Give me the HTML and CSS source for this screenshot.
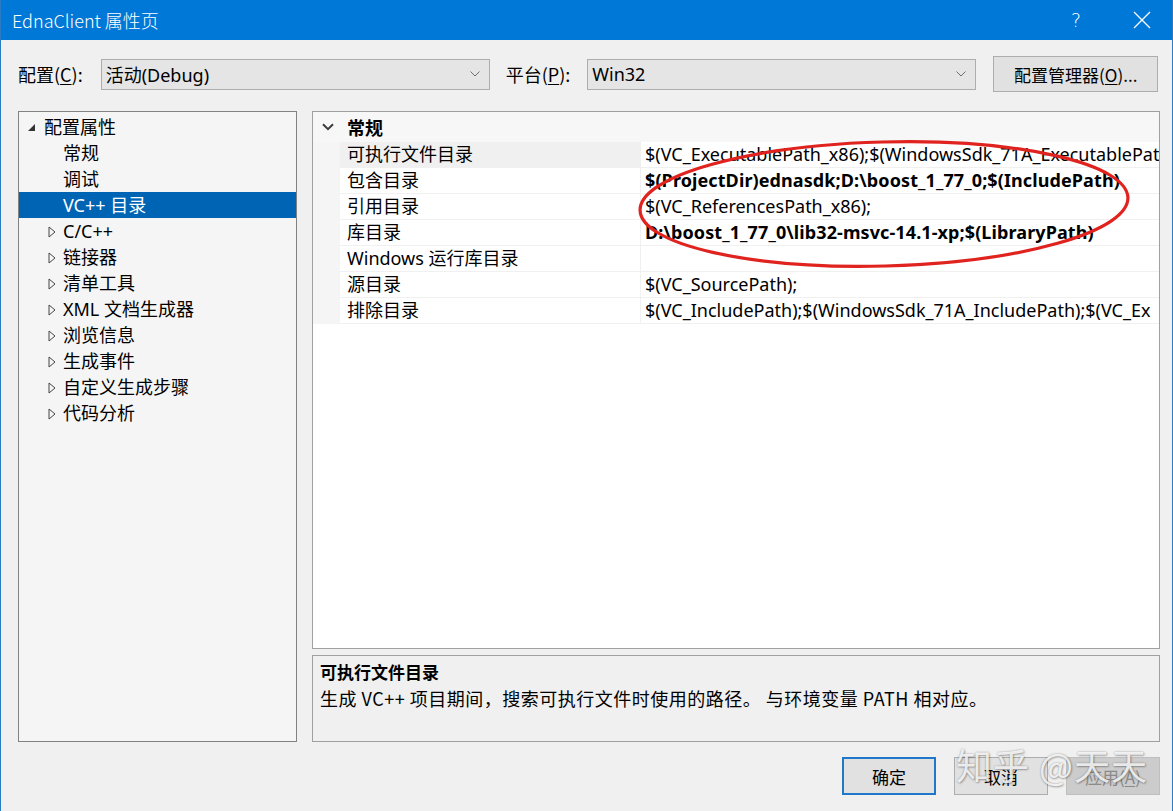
FILE: index.html
```html
<!DOCTYPE html>
<html lang="zh-CN">
<head>
<meta charset="utf-8">
<title>EdnaClient 属性页</title>
<link rel="stylesheet" href="styles.css">
</head>
<body>
<div class="window">
  <header class="titlebar">
    <span class="title">EdnaClient 属性页</span>
    <div class="title-actions">
      <span class="help">?</span>
      <svg class="close" width="18" height="18" viewBox="0 0 18 18"><path d="M1 1 L17 17 M17 1 L1 17" stroke="#fff" stroke-width="1.3" fill="none"/></svg>
    </div>
  </header>

  <div class="content">
    <div class="config-row">
      <label class="lbl">配置(<u>C</u>):</label>
      <div class="combo combo-config"><span>活动(Debug)</span><svg class="chev" width="10" height="6" viewBox="0 0 10 6"><path d="M0.5 0.5 L5 5 L9.5 0.5" stroke="#6d6d6d" stroke-width="1" fill="none"/></svg></div>
      <label class="lbl lbl-platform">平台(<u>P</u>):</label>
      <div class="combo combo-platform"><span>Win32</span><svg class="chev" width="10" height="6" viewBox="0 0 10 6"><path d="M0.5 0.5 L5 5 L9.5 0.5" stroke="#6d6d6d" stroke-width="1" fill="none"/></svg></div>
      <button class="btn btn-manager">配置管理器(<u>O</u>)...</button>
    </div>

    <div class="main">
      <nav class="tree">
        <div class="node root"><svg class="tri" width="9" height="9" viewBox="0 0 9 9"><path d="M8 1 L8 8 L1 8 Z" fill="#333"/></svg><span>配置属性</span></div>
        <div class="node leaf"><span>常规</span></div>
        <div class="node leaf"><span>调试</span></div>
        <div class="node leaf selected"><span>VC++ 目录</span></div>
        <div class="node coll"><svg class="tri" width="8" height="12" viewBox="0 0 8 12"><path d="M1 1 L7 6 L1 11 Z" fill="none" stroke="#444" stroke-width="1"/></svg><span>C/C++</span></div>
        <div class="node coll"><svg class="tri" width="8" height="12" viewBox="0 0 8 12"><path d="M1 1 L7 6 L1 11 Z" fill="none" stroke="#444" stroke-width="1"/></svg><span>链接器</span></div>
        <div class="node coll"><svg class="tri" width="8" height="12" viewBox="0 0 8 12"><path d="M1 1 L7 6 L1 11 Z" fill="none" stroke="#444" stroke-width="1"/></svg><span>清单工具</span></div>
        <div class="node coll"><svg class="tri" width="8" height="12" viewBox="0 0 8 12"><path d="M1 1 L7 6 L1 11 Z" fill="none" stroke="#444" stroke-width="1"/></svg><span>XML 文档生成器</span></div>
        <div class="node coll"><svg class="tri" width="8" height="12" viewBox="0 0 8 12"><path d="M1 1 L7 6 L1 11 Z" fill="none" stroke="#444" stroke-width="1"/></svg><span>浏览信息</span></div>
        <div class="node coll"><svg class="tri" width="8" height="12" viewBox="0 0 8 12"><path d="M1 1 L7 6 L1 11 Z" fill="none" stroke="#444" stroke-width="1"/></svg><span>生成事件</span></div>
        <div class="node coll"><svg class="tri" width="8" height="12" viewBox="0 0 8 12"><path d="M1 1 L7 6 L1 11 Z" fill="none" stroke="#444" stroke-width="1"/></svg><span>自定义生成步骤</span></div>
        <div class="node coll"><svg class="tri" width="8" height="12" viewBox="0 0 8 12"><path d="M1 1 L7 6 L1 11 Z" fill="none" stroke="#444" stroke-width="1"/></svg><span>代码分析</span></div>
      </nav>

      <section class="right">
        <div class="grid">
          <div class="cat">
            <svg class="cat-chev" width="12" height="8" viewBox="0 0 12 8"><path d="M1 1.2 L6 6.2 L11 1.2" stroke="#3c3c3c" stroke-width="2" fill="none"/></svg>
            <span>常规</span>
          </div>
          <div class="prow first"><div class="gut"></div><div class="pname">可执行文件目录</div><div class="pval">$(VC_ExecutablePath_x86);$(WindowsSdk_71A_ExecutablePath);</div></div>
          <div class="prow"><div class="gut"></div><div class="pname">包含目录</div><div class="pval bold">$(ProjectDir)ednasdk;D:\boost_1_77_0;$(IncludePath)</div></div>
          <div class="prow"><div class="gut"></div><div class="pname">引用目录</div><div class="pval">$(VC_ReferencesPath_x86);</div></div>
          <div class="prow"><div class="gut"></div><div class="pname">库目录</div><div class="pval bold">D:\boost_1_77_0\lib32-msvc-14.1-xp;$(LibraryPath)</div></div>
          <div class="prow"><div class="gut"></div><div class="pname">Windows 运行库目录</div><div class="pval"></div></div>
          <div class="prow"><div class="gut"></div><div class="pname">源目录</div><div class="pval">$(VC_SourcePath);</div></div>
          <div class="prow"><div class="gut"></div><div class="pname">排除目录</div><div class="pval">$(VC_IncludePath);$(WindowsSdk_71A_IncludePath);$(VC_Ex</div></div>
          <div class="grid-fill"><div class="gut"></div></div>
        </div>
        <div class="desc">
          <div class="desc-title">可执行文件目录</div>
          <div class="desc-text">生成 VC++ 项目期间，搜索可执行文件时使用的路径。 与环境变量 PATH 相对应。</div>
        </div>
      </section>
    </div>

    <div class="buttons">
      <button class="btn btn-ok">确定</button>
      <button class="btn">取消</button>
      <button class="btn btn-disabled">应用(<u>A</u>)</button>
    </div>
  </div>

  <svg class="mark" width="520" height="150" viewBox="0 0 520 150">
    <ellipse cx="250" cy="72" rx="244" ry="62" transform="rotate(-1.5 250 72)" fill="none" stroke="#e0231f" stroke-width="3.2"/>
  </svg>
  <div class="watermark">知乎 @天天</div>
</div>
</body>
</html>
```

FILE: styles.css
```css
* { box-sizing: border-box; }
html, body { margin: 0; padding: 0; }
body {
  width: 1173px;
  height: 811px;
  overflow: hidden;
  background: #f0f0f0;
  font-family: "Noto Sans", "Noto Sans CJK SC", sans-serif;
  font-size: 18px;
  color: #000;
}
.window {
  position: relative;
  width: 1173px;
  height: 811px;
  border-left: 1px solid #2a7bc4;
  border-right: 1px solid #2a7bc4;
  display: flex;
  flex-direction: column;
  overflow: hidden;
}
.titlebar {
  height: 40px;
  background: #0078d7;
  color: #fff;
  display: flex;
  align-items: center;
  justify-content: space-between;
  padding-left: 11px;
  padding-right: 21px;
  flex-shrink: 0;
}
.title { font-size: 18px; font-family: "Noto Sans CJK SC", "Noto Sans", sans-serif; font-weight: 300; }
.title-actions { display: flex; align-items: center; gap: 52px; }
.help { font-size: 19px; font-weight: 300; font-family: "DejaVu Sans", sans-serif; }
.content {
  flex: 1;
  display: flex;
  flex-direction: column;
  padding: 16px 12px 0 17px;
  min-width: 0;
}
.config-row {
  display: flex;
  align-items: center;
  height: 36px;
}
.config-row > * { flex-shrink: 0; }
.lbl { font-family: "Noto Sans CJK SC", sans-serif; font-size: 18px; white-space: nowrap; }
.lbl u, .btn u { text-decoration: underline; text-underline-offset: 2px; }
.combo {
  height: 31px;
  background: #e5e5e5;
  border: 1px solid #adadad;
  display: flex;
  align-items: center;
  justify-content: space-between;
  padding: 0 9px 0 4px;
  font-size: 18px;
}
.combo-config { width: 389px; margin-left: 18px; }
.lbl-platform { margin-left: 16px; }
.combo-platform { width: 389px; margin-left: 17px; }
.chev { flex-shrink: 0; }
.btn {
  font-family: "Noto Sans CJK SC", "Noto Sans", sans-serif;
  font-size: 17px;
  background: #e1e1e1;
  border: 1px solid #adadad;
  color: #000;
  padding: 0;
  height: 38px;
  width: 94px;
  flex-shrink: 0;
}
.btn-manager { width: 165px; height: 36px; margin-left: 17px; }
.main {
  display: flex;
  gap: 15px;
  margin-top: 19px;
  height: 631px;
  min-width: 0;
}
.tree {
  width: 279px;
  flex-shrink: 0;
  background: #f5f5f5;
  border: 1px solid #828282;
  padding-top: 2px;
  font-family: "Noto Sans", "Noto Sans CJK SC", sans-serif;
}
.node {
  height: 26px;
  display: flex;
  align-items: center;
  position: relative;
  white-space: nowrap;
  line-height: 26px;
}
.node.root span { margin-left: 25px; }
.node.root .tri { position: absolute; left: 8px; top: 9px; }
.node.leaf span, .node.coll span { margin-left: 44px; }
.node.coll .tri { position: absolute; left: 29px; top: 8px; }
.node.selected { background: #0064b4; color: #fff; }
.right {
  flex: 1;
  min-width: 0;
  display: flex;
  flex-direction: column;
  gap: 6px;
}
.grid {
  height: 539px;
  background: #fff;
  border: 1px solid #a0a0a0;
  display: flex;
  flex-direction: column;
  overflow: hidden;
}
.cat {
  height: 30px;
  display: flex;
  align-items: center;
  background: #f7f7f7;
  font-family: "Noto Sans CJK SC", sans-serif;
  font-weight: bold;
  flex-shrink: 0;
}
.cat-chev { margin-left: 9px; margin-right: 13px; }
.prow {
  height: 26px;
  display: flex;
  flex-shrink: 0;
  line-height: 25px;
  min-width: 0;
}
.gut { width: 27px; background: #f5f5f5; flex-shrink: 0; }
.pname {
  width: 301px;
  flex-shrink: 0;
  padding-left: 7px;
  border-bottom: 1px solid #f0f0f0;
  border-right: 1px solid #f0f0f0;
  white-space: nowrap;
  font-family: "Noto Sans", "Noto Sans CJK SC", sans-serif;
}
.prow.first .pname { background: #f0f0f0; }
.pval {
  flex: 1;
  min-width: 0;
  padding-left: 4px;
  white-space: nowrap;
  overflow: hidden;
  border-bottom: 1px solid #f0f0f0;
  letter-spacing: 0;
}
.pval.bold { font-weight: bold; letter-spacing: 0.1px; }
.grid-fill { flex: 1; display: flex; }
.grid-fill .gut { background: #fff; }
.desc {
  height: 87px;
  background: #f0f0f0;
  border: 1px solid #a0a0a0;
  padding: 3px 7px;
}
.desc-title { font-weight: bold; font-family: "Noto Sans CJK SC", sans-serif; line-height: 26px; font-size: 17px; }
.desc-text { font-family: "Noto Sans CJK SC", sans-serif; font-size: 18px; line-height: 26px; letter-spacing: 0.5px; white-space: nowrap; }
.buttons {
  display: flex;
  justify-content: flex-end;
  gap: 18px;
  margin-top: 15px;
}
.btn-ok { border: 2px solid #1f78c8; }
.btn-disabled { background: #cccccc; color: #8a8a8a; border-color: #bfbfbf; }
.mark {
  position: absolute;
  left: 633px;
  top: 132px;
  pointer-events: none;
}
.watermark {
  position: absolute;
  left: 955px;
  top: 738px;
  font-family: "Noto Sans CJK SC", sans-serif;
  font-size: 36px;
  color: rgba(255,255,255,0.85);
  text-shadow: 0 0 2px rgba(0,0,0,0.35), 1px 1px 2px rgba(0,0,0,0.25);
  letter-spacing: 1px;
  pointer-events: none;
}
```
